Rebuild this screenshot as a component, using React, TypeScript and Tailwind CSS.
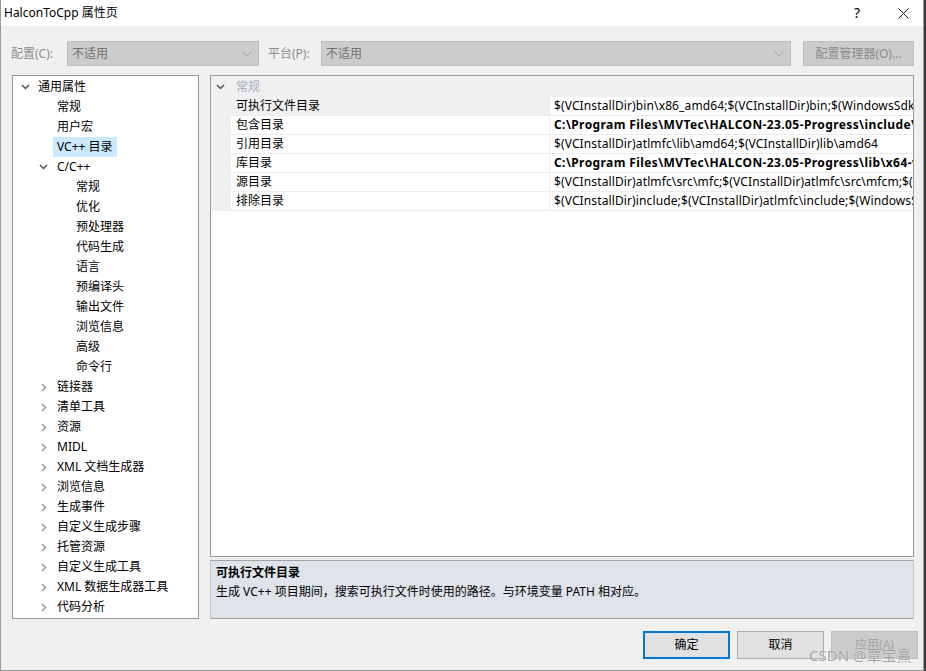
import React from 'react';

const FONT = { fontFamily: '"Noto Sans", "Noto Sans CJK SC", sans-serif' };

type Node = { label: string; level: 0 | 1 | 2; chev?: 'down' | 'right'; selected?: boolean };

const tree: Node[] = [
  { label: '通用属性', level: 0, chev: 'down' },
  { label: '常规', level: 1 },
  { label: '用户宏', level: 1 },
  { label: 'VC++ 目录', level: 1, selected: true },
  { label: 'C/C++', level: 1, chev: 'down' },
  { label: '常规', level: 2 },
  { label: '优化', level: 2 },
  { label: '预处理器', level: 2 },
  { label: '代码生成', level: 2 },
  { label: '语言', level: 2 },
  { label: '预编译头', level: 2 },
  { label: '输出文件', level: 2 },
  { label: '浏览信息', level: 2 },
  { label: '高级', level: 2 },
  { label: '命令行', level: 2 },
  { label: '链接器', level: 1, chev: 'right' },
  { label: '清单工具', level: 1, chev: 'right' },
  { label: '资源', level: 1, chev: 'right' },
  { label: 'MIDL', level: 1, chev: 'right' },
  { label: 'XML 文档生成器', level: 1, chev: 'right' },
  { label: '浏览信息', level: 1, chev: 'right' },
  { label: '生成事件', level: 1, chev: 'right' },
  { label: '自定义生成步骤', level: 1, chev: 'right' },
  { label: '托管资源', level: 1, chev: 'right' },
  { label: '自定义生成工具', level: 1, chev: 'right' },
  { label: 'XML 数据生成器工具', level: 1, chev: 'right' },
  { label: '代码分析', level: 1, chev: 'right' },
];

const props = [
  { name: '可执行文件目录', value: String.raw`$(VCInstallDir)bin\x86_amd64;$(VCInstallDir)bin;$(WindowsSdkDir)bin\NETFX 4.0 Tools;$(WindowsSdkDir)bin` },
  { name: '包含目录', value: String.raw`C:\Program Files\MVTec\HALCON-23.05-Progress\include\halconcpp;$(IncludePath)`, bold: true },
  { name: '引用目录', value: String.raw`$(VCInstallDir)atlmfc\lib\amd64;$(VCInstallDir)lib\amd64` },
  { name: '库目录', value: String.raw`C:\Program Files\MVTec\HALCON-23.05-Progress\lib\x64-win64;$(LibraryPath)`, bold: true },
  { name: '源目录', value: String.raw`$(VCInstallDir)atlmfc\src\mfc;$(VCInstallDir)atlmfc\src\mfcm;$(VCInstallDir)atlmfc\src\atl;$(VCInstallDir)crt\src` },
  { name: '排除目录', value: String.raw`$(VCInstallDir)include;$(VCInstallDir)atlmfc\include;$(WindowsSdkDir)include;$(FrameworkSDKDir)\include` },
];

function ChevDown({ color = '#505050' }: { color?: string }) {
  return (
    <svg width="9" height="6" viewBox="0 0 9 6">
      <polyline points="1,1 4.5,4.5 8,1" fill="none" stroke={color} strokeWidth="1.5" />
    </svg>
  );
}

function ChevRight() {
  return (
    <svg width="6" height="9" viewBox="0 0 6 9">
      <polyline points="1,1 4.5,4.5 1,8" fill="none" stroke="#9a9a9a" strokeWidth="1.5" />
    </svg>
  );
}

function ComboArrow() {
  return (
    <svg width="10" height="6" viewBox="0 0 10 6">
      <polyline points="0.5,0.5 5,5 9.5,0.5" fill="none" stroke="#a6a6a6" strokeWidth="1" />
    </svg>
  );
}

function TreeRow({ node }: { node: Node }) {
  if (node.level === 0) {
    return (
      <div className="h-5 flex items-center pl-[8px]">
        <span className="w-[9px] flex justify-center"><ChevDown /></span>
        <span className="ml-[8px]">{node.label}</span>
      </div>
    );
  }
  if (node.level === 2) {
    return <div className="h-5 flex items-center pl-[63px]">{node.label}</div>;
  }
  if (node.chev) {
    return (
      <div className="h-5 flex items-center pl-[26px]">
        <span className="w-[9px] flex justify-center">
          {node.chev === 'down' ? <ChevDown /> : <ChevRight />}
        </span>
        <span className="ml-[9px]">{node.label}</span>
      </div>
    );
  }
  if (node.selected) {
    return (
      <div className="h-5 flex items-center pl-[40px]">
        <span className="h-5 flex items-center px-[4px] bg-[#cce8ff]">{node.label}</span>
      </div>
    );
  }
  return <div className="h-5 flex items-center pl-[44px]">{node.label}</div>;
}

export default function App() {
  return (
    <div className="w-[926px] h-[671px] bg-[#3a3a3a] text-[12px] text-black overflow-hidden" style={FONT}>
      <div className="relative w-[924px] h-[671px] flex flex-col bg-[#f0f0f0] border-l border-r border-b border-[#9a9a9a]">
        {/* title bar */}
        <div className="h-[26px] bg-white flex items-center shrink-0">
          <span className="ml-[3px]">HalconToCpp 属性页</span>
          <span className="ml-auto mr-[38px] text-[14px] leading-none">?</span>
          <svg className="mr-[14px]" width="11" height="11" viewBox="0 0 11 11">
            <path d="M0.5 0.5 L10.5 10.5 M10.5 0.5 L0.5 10.5" stroke="#222" strokeWidth="1" />
          </svg>
        </div>

        {/* configuration row */}
        <div className="mt-[15px] h-[25px] flex items-center shrink-0">
          <span className="ml-[10px] w-[56px] text-[#8d8d8d]">配置(C):</span>
          <div className="w-[192px] h-[25px] bg-[#cccccc] border border-[#bfbfbf] flex items-center pl-[4px] pr-[6px] text-[#707070]">
            <span>不适用</span>
            <span className="ml-auto"><ComboArrow /></span>
          </div>
          <span className="ml-[9px] w-[53px] text-[#8d8d8d]">平台(P):</span>
          <div className="w-[470px] h-[25px] bg-[#cccccc] border border-[#bfbfbf] flex items-center pl-[4px] pr-[6px] text-[#707070]">
            <span>不适用</span>
            <span className="ml-auto"><ComboArrow /></span>
          </div>
          <div className="ml-[12px] w-[111px] h-[25px] bg-[#cccccc] border border-[#bfbfbf] flex items-center justify-center text-[#8a8a8a]">
            配置管理器(O)...
          </div>
        </div>

        {/* main area */}
        <div className="mt-[9px] h-[544px] flex shrink-0">
          <div className="ml-[11px] w-[187px] h-full bg-white border border-[#9a9a9a] overflow-hidden pt-[1px]">
            {tree.map((n, i) => (
              <TreeRow key={i} node={n} />
            ))}
          </div>

          <div className="ml-[11px] w-[704px] h-full flex flex-col">
            <div className="h-[482px] bg-white border border-[#9a9a9a] overflow-hidden">
              <div className="h-[21px] bg-[#f0f0f0] flex items-center pt-[1px]">
                <span className="ml-[5px] w-[9px] flex justify-center"><ChevDown /></span>
                <span className="ml-[11px] text-[#a7afbb]">常规</span>
              </div>
              {props.map((p, i) => (
                <div key={i} className="h-[19px] flex">
                  <div className="w-[20px] shrink-0 bg-[#f0f0f0]" />
                  <div className="flex-1 min-w-0 flex border-b border-[#ececec]">
                    <div className={`w-[318px] shrink-0 pl-[5px] flex items-center whitespace-nowrap ${i === 0 ? 'bg-[#f0f0f0]' : 'bg-white'}`}>
                      {p.name}
                    </div>
                    <div className="w-px shrink-0 bg-[#ececec]" />
                    <div className={`flex-1 min-w-0 pl-[4px] flex items-center whitespace-nowrap overflow-hidden ${p.bold ? 'font-bold tracking-[0.4px]' : 'tracking-[0.12px]'}`}>
                      {p.value}
                    </div>
                  </div>
                </div>
              ))}
            </div>

            <div className="mt-[3px] h-[59px] bg-[#dfe3ea] border-t border-b border-[#a3a3a3] border-l border-r border-l-[#c8c8c8] border-r-[#c8c8c8] pl-[5px] pt-[2px]">
              <div className="h-[19px] flex items-center font-bold">可执行文件目录</div>
              <div className="h-[19px] flex items-center">生成 VC++ 项目期间，搜索可执行文件时使用的路径。与环境变量 PATH 相对应。</div>
            </div>
          </div>
        </div>

        {/* buttons */}
        <div className="mt-[12px] h-[28px] flex shrink-0">
          <div className="ml-[642px] w-[87px] h-[28px] bg-[#e1e1e1] border-2 border-[#0078d7] flex items-center justify-center">确定</div>
          <div className="ml-[7px] w-[87px] h-[28px] bg-[#e1e1e1] border border-[#adadad] flex items-center justify-center">取消</div>
          <div className="ml-[7px] w-[87px] h-[28px] bg-[#cccccc] border border-[#bfbfbf] flex items-center justify-center text-[#a0a0a0]">应用(A)</div>
        </div>

        <span className="absolute left-[808px] top-[644px] text-[15px] whitespace-nowrap text-[#8a8a8a]/80" style={{ textShadow: '0 0 1px #fff' }}>
          CSDN @覃宝熹
        </span>
      </div>
    </div>
  );
}
